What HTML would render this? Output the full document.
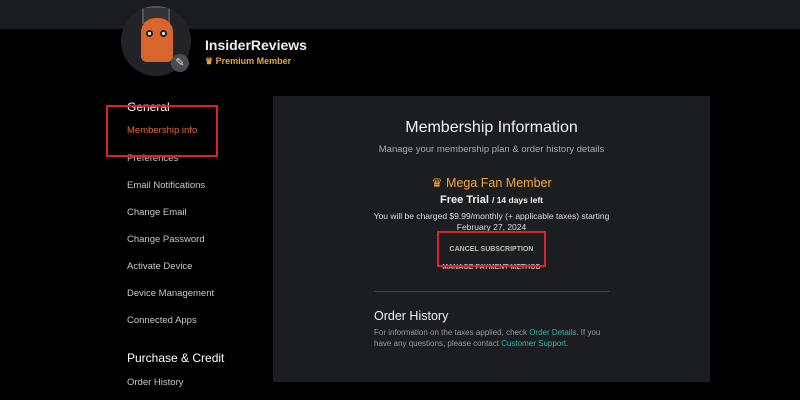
<!DOCTYPE html>
<html><head><meta charset="utf-8"><style>
*{margin:0;padding:0;box-sizing:border-box}
body{width:800px;height:400px;background:#000;font-family:"Liberation Sans",sans-serif;position:relative;overflow:hidden;color:#fff}
.top{position:absolute;left:0;top:0;width:800px;height:29px;background:#1b1c1f}
.abs{position:absolute;white-space:nowrap}
.panel{position:absolute;left:273px;top:96px;width:437px;height:286px;background:#1c1d20}
.nav{position:absolute;left:127px;font-size:9.5px;color:#c8c8c8}
.red{position:absolute;border:2px solid #d8232a}
</style></head><body>
<div class="top"></div>
<div class="abs" style="left:121px;top:6px;width:70px;height:70px;border-radius:50%;background:#222327;overflow:hidden">
  <div style="position:absolute;left:21px;top:0;width:28px;height:18px;background:#333;border:2px solid #555"></div>
  <div style="position:absolute;left:20px;top:12px;width:32px;height:44px;background:#d8652c;border-radius:14px 14px 6px 6px"></div>
  <div style="position:absolute;left:25px;top:24px;width:7px;height:7px;background:#fff;border-radius:50%;border:2px solid #222"></div>
  <div style="position:absolute;left:39px;top:24px;width:7px;height:7px;background:#fff;border-radius:50%;border:2px solid #222"></div>
</div>
<div class="abs" style="left:171px;top:54px;width:18px;height:18px;border-radius:50%;background:#4a4c52;color:#ddd;font-size:11px;text-align:center;line-height:18px">✎</div>
<div class="abs" style="left:205px;top:37px;font-size:14px;font-weight:bold;color:#f0f0f0">InsiderReviews</div>
<div class="abs" style="left:205px;top:56px;font-size:9px;font-weight:bold;color:#e8a43c">♛ Premium Member</div>

<div class="nav" style="top:100px;font-size:12px;color:#fff">General</div>
<div class="nav" style="top:125px;color:#e8683c">Membership info</div>
<div class="nav" style="top:153px">Preferences</div>
<div class="nav" style="top:180px">Email Notifications</div>
<div class="nav" style="top:207px">Change Email</div>
<div class="nav" style="top:234px">Change Password</div>
<div class="nav" style="top:261px">Activate Device</div>
<div class="nav" style="top:288px">Device Management</div>
<div class="nav" style="top:315px">Connected Apps</div>
<div class="nav" style="top:351px;font-size:12px;color:#fff">Purchase &amp; Credit</div>
<div class="nav" style="top:377px">Order History</div>
<div class="red" style="left:106px;top:105px;width:112px;height:52px"></div>

<div class="panel"></div>
<div class="abs" style="left:273px;width:437px;text-align:center;top:119px;font-size:16px;color:#f2f2f2">Membership Information</div>
<div class="abs" style="left:273px;width:437px;text-align:center;top:144px;font-size:9.5px;color:#aaa">Manage your membership plan &amp; order history details</div>
<div class="abs" style="left:273px;width:437px;text-align:center;top:175px;font-size:12.5px;color:#f0a93a">♛ Mega Fan Member</div>
<div class="abs" style="left:273px;width:437px;text-align:center;top:194px;font-size:11px;font-weight:bold;color:#f2f2f2">Free Trial <span style="font-size:8.5px">/ 14 days left</span></div>
<div class="abs" style="left:273px;width:437px;text-align:center;top:211px;font-size:8.5px;color:#ddd;line-height:11px">You will be charged $9.99/monthly (+ applicable taxes) starting<br>February 27, 2024</div>
<div class="abs" style="left:273px;width:437px;text-align:center;top:246px;font-size:7px;font-weight:bold;color:#bbb">CANCEL SUBSCRIPTION</div>
<div class="abs" style="left:273px;width:437px;text-align:center;top:264px;font-size:7px;font-weight:bold;color:#bbb">MANAGE PAYMENT METHOD</div>
<div class="red" style="left:437px;top:231px;width:109px;height:36px"></div>
<div class="abs" style="left:374px;top:291px;width:236px;height:1px;background:#444"></div>
<div class="abs" style="left:374px;top:309px;font-size:12.5px;color:#f2f2f2">Order History</div>
<div class="abs" style="left:374px;top:328px;font-size:8px;color:#999;line-height:10.5px">For information on the taxes applied, check <span style="color:#2fb8a6">Order Details</span>. If you<br>have any questions, please contact <span style="color:#2fb8a6">Customer Support</span>.</div>
</body></html>
